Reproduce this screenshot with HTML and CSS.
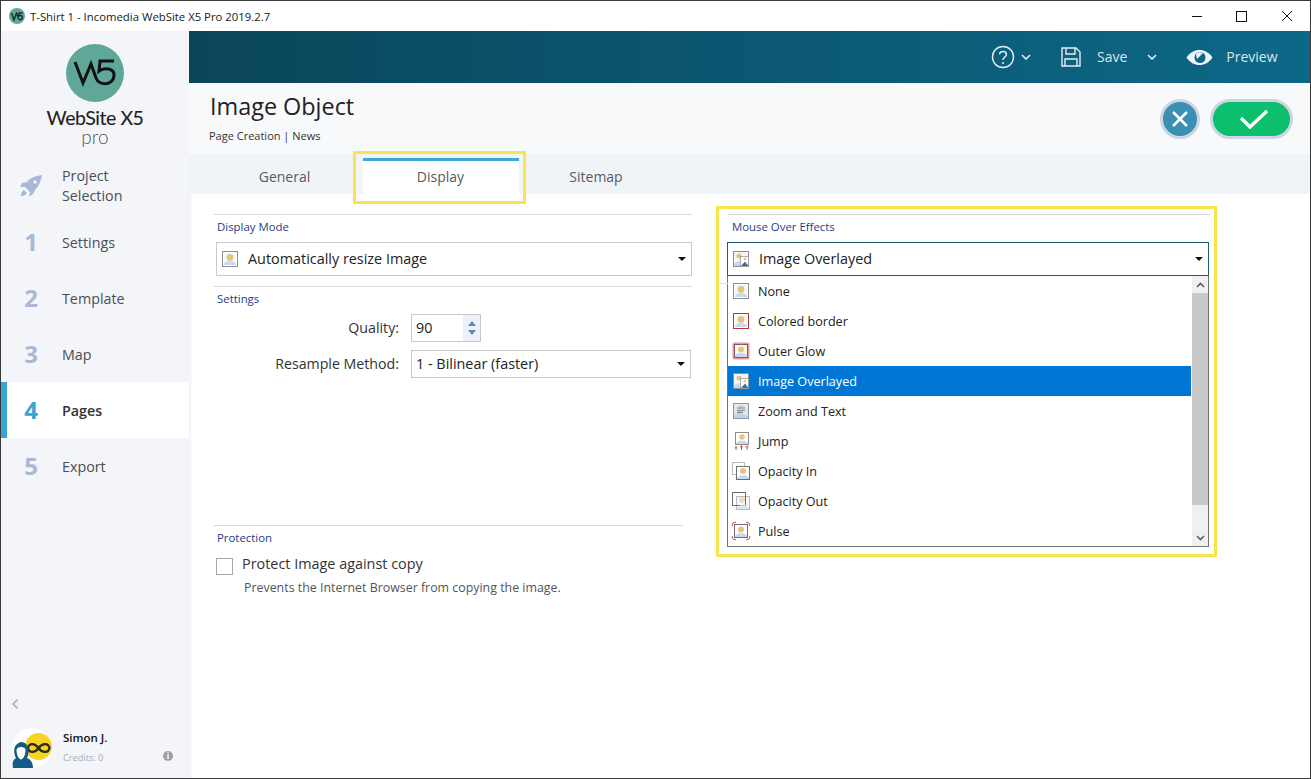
FILE: index.html
```html
<!DOCTYPE html>
<html lang="en">
<head>
<meta charset="utf-8">
<title>T-Shirt 1 - Incomedia WebSite X5 Pro 2019.2.7</title>
<link rel="stylesheet" href="styles.css">
</head>
<body>
<svg class="defs" width="0" height="0" aria-hidden="true">
  <defs>
    <symbol id="pic" viewBox="0 0 16 16">
      <rect x="0.5" y="0.5" width="15" height="15" fill="#fff" stroke="#8d8d8d"/>
      <rect x="2" y="2" width="12" height="12" fill="#f4f7fb"/>
      <circle cx="8" cy="6.5" r="3.4" fill="#e9c27c"/>
      <path d="M2 14 L2 12.5 L6 10 L8 10.8 L10 10 L14 12.5 L14 14 Z" fill="#c6d9ee"/>
    </symbol>
    <symbol id="pic-red" viewBox="0 0 16 16">
      <rect x="0.5" y="0.5" width="15" height="15" fill="#fff" stroke="#b8333a"/>
      <rect x="2" y="2" width="12" height="12" fill="#f4f7fb"/>
      <circle cx="8" cy="6.5" r="3.4" fill="#e9c27c"/>
      <path d="M2 14 L2 12.5 L6 10 L8 10.8 L10 10 L14 12.5 L14 14 Z" fill="#c6d9ee"/>
    </symbol>
    <symbol id="pic-glow" viewBox="0 0 18 18">
      <rect x="0.5" y="0.5" width="17" height="17" rx="2" fill="#eb9a9c"/>
      <rect x="2.5" y="2.5" width="13" height="13" fill="#fbf7f5" stroke="#85595c"/>
      <circle cx="9" cy="7.5" r="3" fill="#e9c27c"/>
      <path d="M3 15 L3 13 L7 11 L9 11.6 L11 11 L15 13 L15 15 Z" fill="#c6d9ee"/>
    </symbol>
    <symbol id="pic-over" viewBox="0 0 16 16">
      <rect x="0.5" y="0.5" width="15" height="15" fill="#f4f7fb" stroke="#8d8d8d"/>
      <circle cx="6" cy="5" r="2.6" fill="#e9c27c"/>
      <path d="M1 15 L1 12.5 L5 10 L8 11 L8 15 Z" fill="#c8d9ec"/>
      <rect x="7.5" y="5.5" width="8" height="10" fill="#fff" stroke="#8d8d8d" stroke-width="0.7"/>
      <circle cx="12" cy="8" r="1.3" fill="#e9c27c"/>
      <path d="M8 15 L12 10.5 L15.5 15 Z" fill="#3d6ea6"/>
    </symbol>
    <symbol id="pic-zoom" viewBox="0 0 16 16">
      <rect x="0.5" y="0.5" width="15" height="15" fill="#dfe7f1" stroke="#8d99a8"/>
      <path d="M1 15 L1 12.5 L6 10 L10 11 L15 13 L15 15 Z" fill="#bdd2ea"/>
      <path d="M4 5 H12 M4 7.2 H12 M4 9.4 H10" stroke="#7b7f84" stroke-width="1.1"/>
      <path d="M6 3.4 H10" stroke="#e1bb78" stroke-width="1"/>
    </symbol>
    <symbol id="pic-jump" viewBox="0 0 16 18">
      <rect x="2.5" y="0.5" width="13" height="12" fill="#fff" stroke="#8d8d8d"/>
      <circle cx="9" cy="5" r="2.8" fill="#e9c27c"/>
      <path d="M3 12 L3 10.8 L7 8.5 L9 9 L11 8.5 L15 10.8 L15 12 Z" fill="#c6d9ee"/>
      <path d="M3 18 V15 M1.5 16 L3 14.6 L4.5 16 M8.5 18 V14 M7 15.2 L8.5 13.8 L10 15.2 M14 18 V14 M12.5 15.2 L14 13.8 L15.5 15.2" stroke="#bf5a3c" stroke-width="1" fill="none"/>
    </symbol>
    <symbol id="pic-in" viewBox="0 0 18 18">
      <rect x="0.5" y="0.5" width="12" height="12" fill="#fbfcfd" stroke="#bcbcbc"/>
      <rect x="4.5" y="4.5" width="13" height="13" fill="#fff" stroke="#6f6f6f"/>
      <circle cx="11" cy="9" r="3" fill="#e9c27c"/>
      <path d="M5 17 L5 15.5 L9 13 L11 13.6 L13 13 L17 15.5 L17 17 Z" fill="#c6d9ee"/>
    </symbol>
    <symbol id="pic-out" viewBox="0 0 18 18">
      <rect x="4.5" y="4.5" width="13" height="13" fill="#f8f9fb" stroke="#bcbcbc"/>
      <rect x="0.5" y="0.5" width="13" height="13" fill="none" stroke="#6f6f6f"/>
      <circle cx="10" cy="8" r="3" fill="#f0dcb6"/>
      <path d="M5 17 L5 15.5 L9 13 L11 13.6 L13 13 L17 15.5 L17 17 Z" fill="#dbe6f3"/>
    </symbol>
    <symbol id="pic-pulse" viewBox="0 0 20 20">
      <rect x="3.5" y="3.5" width="13" height="13" fill="#fff" stroke="#6f6f6f"/>
      <circle cx="10" cy="8.5" r="3" fill="#e9c27c"/>
      <path d="M4 16 L4 14.5 L8 12 L10 12.6 L12 12 L16 14.5 L16 16 Z" fill="#c6d9ee"/>
      <path d="M1 5 Q1 1 5 1 M15 1 Q19 1 19 5 M1 15 Q1 19 5 19 M15 19 Q19 19 19 15" fill="none" stroke="#c4583c" stroke-width="1"/>
    </symbol>
  </defs>
</svg>

<div class="window">
  <header class="titlebar">
    <div class="title-left">
      <span class="app-icon"><svg width="12" height="9" viewBox="0 0 24 18"><path d="M1 2 L6 16 L11 2 L15 13 C17 17 23 16 23 11 C23 7 18 6 15 8 L16 2 H23" fill="none" stroke="#14262a" stroke-width="2.6"/></svg></span>
      <span class="title-text">T-Shirt 1 - Incomedia WebSite X5 Pro 2019.2.7</span>
    </div>
    <div class="win-controls">
      <svg width="12" height="12" viewBox="0 0 12 12"><path d="M1 6.5 H11" stroke="#111" stroke-width="1"/></svg>
      <svg width="12" height="12" viewBox="0 0 12 12"><rect x="0.5" y="1.5" width="10" height="10" fill="none" stroke="#111"/></svg>
      <svg width="12" height="12" viewBox="0 0 12 12"><path d="M1 1 L11 11 M11 1 L1 11" stroke="#111" stroke-width="1"/></svg>
    </div>
  </header>
  <div class="shell">
    <aside class="sidebar">
      <div class="brand">
        <span class="brand-circle"><svg width="44" height="30" viewBox="0 0 44 30"><path d="M2 4 L10 25 L18 6 L23 20 C26 28 40 28 41 18 C42 10 31 9 26 13 L27 3 H41" fill="none" stroke="#111" stroke-width="3"/></svg></span>
        <span class="brand-name">WebSite X5</span>
        <span class="brand-pro">pro</span>
      </div>
      <nav class="nav">
        <div class="nav-item nav-first">
          <span class="nav-num"><svg width="24" height="24" viewBox="0 0 24 24"><path d="M23 1 C16 2 11 4 8 8 L3 9 L1 13 L6 13 L11 18 L10 23 L14 20 L16 16 C20 12 22 7 23 1 Z" fill="#a9b8d6"/><path d="M5 16 C3 17 2 19 2 22 C5 22 7 21 8 19 Z" fill="#a9b8d6"/><circle cx="16" cy="8" r="1.8" fill="#f3f5f8"/></svg></span>
          <span class="nav-label">Project<br>Selection</span>
        </div>
        <div class="nav-item"><span class="nav-num">1</span><span class="nav-label">Settings</span></div>
        <div class="nav-item"><span class="nav-num">2</span><span class="nav-label">Template</span></div>
        <div class="nav-item"><span class="nav-num">3</span><span class="nav-label">Map</span></div>
        <div class="nav-item active"><span class="nav-num">4</span><span class="nav-label">Pages</span></div>
        <div class="nav-item"><span class="nav-num">5</span><span class="nav-label">Export</span></div>
      </nav>
      <div class="collapse"><svg width="8" height="12" viewBox="0 0 8 12"><path d="M6.5 1.5 L2 6 L6.5 10.5" fill="none" stroke="#b4b9bf" stroke-width="1.8"/></svg></div>
      <div class="user">
        <svg class="avatar" width="40" height="40" viewBox="0 0 40 40">
          <circle cx="20" cy="20" r="20" fill="#fff"/>
          <circle cx="26.5" cy="18.5" r="13.5" fill="#f5d327"/>
          <path d="M26.5 20 C23 15 17 14.5 16 20 C17 25.5 23 25 26.5 20 C30 15 36.5 14.5 37.5 20 C36.5 25.5 30 25 26.5 20 Z" fill="none" stroke="#2d2a16" stroke-width="2.2"/>
          <path d="M1 40 C0 34 1 32 4 30 C1 25 1 16 9 14 C17 14 18 24 15 30 C18 31 21 34 21 40 Z" fill="#135c85"/>
          <path d="M4.5 22 C4.5 18 13.5 18 13.5 22 C13.5 28 10.5 31.5 9 31.5 C7.5 31.5 4.5 28 4.5 22 Z" fill="#fff"/>
        </svg>
        <div class="user-info">
          <span class="user-name">Simon J.</span>
          <span class="user-credits">Credits: 0</span>
        </div>
        <span class="info-dot">i</span>
      </div>
    </aside>
    <main class="main">
      <div class="topbar">
        <svg width="24" height="24" viewBox="0 0 24 24"><circle cx="12" cy="12" r="10.5" fill="none" stroke="#e3eef3" stroke-width="1.4"/><path d="M8.6 9.2 C8.8 5.6 15.4 5.6 15.4 9.4 C15.4 12 12 12 12 15" fill="none" stroke="#e3eef3" stroke-width="1.5"/><circle cx="12" cy="18" r="1" fill="#e3eef3"/></svg>
        <svg class="chev chev-help" width="10" height="6" viewBox="0 0 10 6"><path d="M1 1 L5 5 L9 1" fill="none" stroke="#e3eef3" stroke-width="1.6"/></svg>
        <svg class="save-icon" width="20" height="20" viewBox="0 0 20 20"><path d="M1 1 H15 L19 5 V19 H1 Z M5 1 V7 H14 V1 M4 19 V12 H16 V19" fill="none" stroke="#e3eef3" stroke-width="1.4"/></svg>
        <span class="top-text save-text">Save</span>
        <svg class="chev chev-save" width="10" height="6" viewBox="0 0 10 6"><path d="M1 1 L5 5 L9 1" fill="none" stroke="#e3eef3" stroke-width="1.6"/></svg>
        <svg class="eye-icon" width="27" height="17" viewBox="0 0 27 17"><path d="M0.5 8.5 C7 -1.5 20 -1.5 26.5 8.5 C20 18.5 7 18.5 0.5 8.5 Z" fill="#f0f6f9"/><circle cx="14" cy="8.5" r="5.5" fill="#0d6888"/><path d="M10 5.5 A5 5 0 0 1 17 4 L11 10 Z" fill="#f0f6f9"/></svg>
        <span class="top-text preview-text">Preview</span>
      </div>
      <div class="objhead">
        <div>
          <h1 class="obj-title">Image Object</h1>
          <p class="obj-crumb">Page Creation | News</p>
        </div>
        <div class="obj-actions">
          <button class="btn-cancel" aria-label="Cancel"><svg width="18" height="18" viewBox="0 0 18 18"><path d="M2 2 L16 16 M16 2 L2 16" stroke="#fff" stroke-width="2.6"/></svg></button>
          <button class="btn-ok" aria-label="OK"><svg class="check" width="30" height="20" viewBox="0 0 30 20"><path d="M2 9 L11 18 L28 2" fill="none" stroke="#fff" stroke-width="3.4"/></svg></button>
        </div>
      </div>
      <div class="tabs">
        <div class="tab">General</div>
        <div class="tab tab-active">Display</div>
        <div class="tab">Sitemap</div>
      </div>
      <div class="content">
        <div class="col-left">
          <section class="group">
            <div class="group-label">Display Mode</div>
            <div class="combo combo-large">
              <svg class="ic"><use href="#pic"/></svg>
              <span class="combo-text">Automatically resize Image</span>
              <span class="caret"></span>
            </div>
          </section>
          <section class="group group-settings">
            <div class="group-label">Settings</div>
            <div class="form-row form-row-first">
              <label class="form-label">Quality:</label>
              <div class="spin">
                <span class="spin-text">90</span>
                <span class="spin-btn"><i class="up"></i><i class="down"></i></span>
              </div>
            </div>
            <div class="form-row">
              <label class="form-label">Resample Method:</label>
              <div class="combo combo-small"><span class="combo-text">1 - Bilinear (faster)</span><span class="caret"></span></div>
            </div>
          </section>
          <section class="group group-protect">
            <div class="group-label">Protection</div>
            <div class="check-row"><span class="checkbox"></span><span class="check-text">Protect Image against copy</span></div>
            <p class="hint">Prevents the Internet Browser from copying the image.</p>
          </section>
        </div>
        <div class="col-right">
          <section class="group">
            <div class="group-label">Mouse Over Effects</div>
            <div class="combo combo-large combo-open">
              <svg class="ic"><use href="#pic-over"/></svg>
              <span class="combo-text">Image Overlayed</span>
              <span class="caret"></span>
            </div>
            <div class="listbox">
              <ul class="items">
                <li><svg class="ic"><use href="#pic"/></svg>None</li>
                <li><svg class="ic"><use href="#pic-red"/></svg>Colored border</li>
                <li><svg class="ic ic-18"><use href="#pic-glow"/></svg>Outer Glow</li>
                <li class="selected"><svg class="ic"><use href="#pic-over"/></svg>Image Overlayed</li>
                <li><svg class="ic"><use href="#pic-zoom"/></svg>Zoom and Text</li>
                <li><svg class="ic ic-18"><use href="#pic-jump"/></svg>Jump</li>
                <li><svg class="ic ic-18"><use href="#pic-in"/></svg>Opacity In</li>
                <li><svg class="ic ic-18"><use href="#pic-out"/></svg>Opacity Out</li>
                <li><svg class="ic ic-20"><use href="#pic-pulse"/></svg>Pulse</li>
              </ul>
              <div class="scrollbar">
                <span class="sb-btn"><svg width="9" height="6" viewBox="0 0 9 6"><path d="M1 5 L4.5 1.5 L8 5" fill="none" stroke="#5f5f5f" stroke-width="1.6"/></svg></span>
                <span class="sb-thumb"></span>
                <span class="sb-track"></span>
                <span class="sb-btn"><svg width="9" height="6" viewBox="0 0 9 6"><path d="M1 1 L4.5 4.5 L8 1" fill="none" stroke="#5f5f5f" stroke-width="1.6"/></svg></span>
              </div>
            </div>
          </section>
        </div>
      </div>
    </main>
  </div>
</div>
</body>
</html>
```
FILE: styles.css
```css
* { box-sizing: border-box; }
html, body { margin: 0; padding: 0; height: 100%; overflow: hidden; background: #fff; }
body { font-family: "Open Sans", "Noto Sans", sans-serif; color: #222; }
.defs { position: absolute; }

.window { width: 1311px; height: 779px; border: 1px solid #3a3a3a; display: flex; flex-direction: column; background: #fff; }
.titlebar { height: 30px; flex: none; display: flex; align-items: center; justify-content: space-between; background: #fff; }
.title-left { display: flex; align-items: center; padding-left: 8px; gap: 5px; }
.app-icon { width: 16px; height: 16px; border-radius: 50%; background: #5fa799; display: flex; align-items: center; justify-content: center; }
.title-text { font-size: 11.35px; color: #1a1a1a; }
.win-controls { display: flex; gap: 33px; padding-right: 17px; }

.shell { flex: 1; display: flex; min-height: 0; }
.sidebar { width: 188px; flex: none; background: #f3f5f8; display: flex; flex-direction: column; }
.brand { height: 127px; display: flex; flex-direction: column; align-items: center; padding-top: 13px; }
.brand-circle { width: 58px; height: 58px; flex: none; border-radius: 50%; background: #5fa799; display: flex; align-items: center; justify-content: center; }
.brand-name { font-family: "Lato", sans-serif; font-size: 19.5px; letter-spacing: -0.45px; line-height: 20px; margin-top: 6px; color: #222; -webkit-text-stroke: 0.1px #222; }
.brand-pro { font-family: "Lato", sans-serif; font-weight: 300; font-size: 19px; line-height: 15px; margin-top: 1px; color: #555; }

.nav { display: flex; flex-direction: column; }
.nav-item { height: 56px; display: flex; align-items: center; color: #4a4f55; font-size: 14.3px; line-height: 20px; }
.nav-item .nav-label { padding-top: 2px; }
.nav-first { height: 55px; margin-bottom: 1px; padding-top: 1px; }
.nav-item.nav-first .nav-label { padding-top: 0; }
.nav-num { width: 61px; flex: none; display: flex; justify-content: center; padding-right: 1px; font-size: 24px; font-weight: 700; color: #a9b8d6; }
.nav-item.active { background: #fff; box-shadow: inset 6px 0 0 #3aa5d3; color: #333; font-weight: 600; }
.nav-item.active .nav-num { color: #3aa5d3; }
.collapse { margin-top: auto; padding: 0 0 20px 10px; line-height: 0; }
.user { display: flex; align-items: flex-start; height: 48px; position: relative; padding-left: 11px; }
.avatar { flex: none; margin-top: -2px; }
.user-info { display: flex; flex-direction: column; margin-left: 11px; }
.user-name { font-size: 11.5px; line-height: 16px; color: #111; font-weight: 600; }
.user-credits { font-size: 9.2px; line-height: 14px; color: #a8adb3; margin-top: 5px; }
.info-dot { position: absolute; left: 162px; top: 21px; width: 10px; height: 10px; border-radius: 50%; background: #9aa0a6; color: #fff; font-size: 8px; line-height: 10px; text-align: center; font-weight: 700; }

.main { flex: 1; min-width: 0; display: flex; flex-direction: column; box-shadow: inset 5px 0 5px -4px #e8edf2; }
.topbar { height: 52px; flex: none; background: linear-gradient(90deg, #0a4659 0%, #0b5670 45%, #0d6888 100%); display: flex; align-items: center; padding-left: 802px; color: #dce9ef; }
.chev-help { margin-left: 6px; }
.save-icon { margin-left: 30px; }
.top-text { font-size: 14px; color: #d9e7ed; padding-bottom: 2px; }
.save-text { margin-left: 16px; }
.chev-save { margin-left: 20px; }
.eye-icon { margin-left: 29px; }
.preview-text { margin-left: 13px; }

.objhead { height: 71px; flex: none; background: #f8f9fb; display: flex; justify-content: space-between; padding: 8px 17px 0 20px; }
.obj-title { margin: 0 0 0 1px; font-size: 23.4px; line-height: 30px; font-weight: 400; color: #222; }
.obj-crumb { margin: 7px 0 0; font-size: 11px; line-height: 16px; color: #333; }
.obj-actions { display: flex; gap: 10px; padding-top: 8px; align-items: flex-start; }
.btn-cancel, .btn-ok { border: 3.5px solid #cdd6e4; padding: 0; display: flex; align-items: center; justify-content: center; cursor: pointer; }
.btn-cancel { width: 40px; height: 40px; border-radius: 50%; background: #3a8fb2; }
.btn-ok { width: 83px; height: 40px; border-radius: 20px; background: #0bbf6c; }
.check { margin-left: 4px; }

.tabs { height: 40px; flex: none; background: #f1f4f7; display: flex; padding-left: 17px; position: relative; }
.tab { width: 156px; display: flex; align-items: center; justify-content: center; font-size: 14px; color: #555b62; padding-top: 4px; }
.tab:first-child { width: 157px; }
.tab:last-child { width: 154px; }
.tab-active { background: #fff; border-top: 3px solid #3aabd8; position: relative; margin-top: 4px; padding-top: 0; padding-bottom: 3px; padding-right: 1px; }
.tab-active::after { content: ""; box-sizing: border-box; position: absolute; left: -10px; top: -10px; width: 173px; height: 53px; border: 3px solid #f7e44e; }

.content { flex: 1; display: flex; min-height: 0; padding-left: 25px; }
.col-left { width: 478px; flex: none; padding-top: 20px; }
.col-right { width: 501px; height: 351px; flex: none; margin: 12px 0 0 24px; border: 3px solid #f7e44e; padding: 5px 4px 0 9px; position: relative; }
.col-right::before { content: ""; position: absolute; left: 1px; width: 8px; top: 74px; height: 1px; background: #dfe3e7; }

.group { border-top: 1px solid #d5dae0; }
.group-settings { margin-top: 10px; }
.group-protect { margin-top: 147px; width: 469px; }
.group-label { height: 27px; padding: 4px 0 0 3px; font-size: 11.4px; line-height: 16px; color: #1f3c88; }
.col-right .group-label { padding-left: 4px; }

.combo { display: flex; align-items: center; border: 1px solid #c9c9c9; background: #fff; position: relative; }
.combo-large { height: 34px; margin-left: 2px; padding-left: 5px; font-size: 14.4px; }
.col-right .combo-large { margin-left: -1px; width: 482px; border-color: #1f5a70; }
.combo-text { color: #222; padding-bottom: 2px; }
.combo-large .combo-text { margin-left: 10px; }
.combo-small { width: 280px; height: 28px; padding-left: 4px; font-size: 14.4px; }
.caret { position: absolute; right: 5px; top: 50%; margin-top: -2px; width: 0; height: 0; border-left: 4px solid transparent; border-right: 4px solid transparent; border-top: 4px solid #111; }

.ic { width: 16px; height: 16px; flex: none; }
.ic-18 { width: 18px; height: 18px; margin: 0 -1px; }
.ic-20 { width: 20px; height: 20px; margin: 0 -2px; }

.form-row { display: flex; align-items: center; margin-bottom: 8px; }
.form-label { width: 185px; margin-right: 12px; text-align: right; font-size: 14.2px; color: #333; padding-bottom: 2px; }
.spin { width: 70px; height: 28px; border: 1px solid #c9c9c9; display: flex; align-items: center; justify-content: space-between; padding-left: 4px; font-size: 14.4px; }
.spin-text { padding-bottom: 2px; }
.spin-btn { width: 17px; height: 26px; background: #eef1f7; display: flex; flex-direction: column; align-items: center; justify-content: center; gap: 4px; }
.up { width: 0; height: 0; border-left: 4px solid transparent; border-right: 4px solid transparent; border-bottom: 5px solid #5d8ab8; }
.down { width: 0; height: 0; border-left: 4px solid transparent; border-right: 4px solid transparent; border-top: 5px solid #5d8ab8; }

.check-row { display: flex; align-items: center; height: 24px; margin-left: 2px; margin-top: 1px; }
.checkbox { width: 17px; height: 17px; border: 1px solid #a7a7a7; background: #fff; flex: none; }
.check-text { margin-left: 9px; font-size: 14.4px; color: #333; padding-bottom: 6px; }
.hint { margin: 2px 0 0 30px; font-size: 12.4px; line-height: 16px; color: #555; }

.listbox { width: 482px; height: 271px; margin-left: -1px; border: 1px solid #6f7478; border-top: none; display: flex; }
.items { list-style: none; margin: 0; padding: 0; width: 463px; flex: none; }
.items li { height: 30px; display: flex; align-items: center; padding-left: 5px; gap: 9px; font-size: 12.6px; color: #222; }
.items li.selected { background: #0076d4; color: #fff; }
.scrollbar { width: 16px; margin-left: 1px; display: flex; flex-direction: column; flex: none; background: #f0f0f0; }
.sb-btn { height: 17px; display: flex; align-items: center; justify-content: center; flex: none; }
.sb-thumb { height: 212px; background: #c8c8c8; flex: none; }
.sb-track { flex: 1; }
```
